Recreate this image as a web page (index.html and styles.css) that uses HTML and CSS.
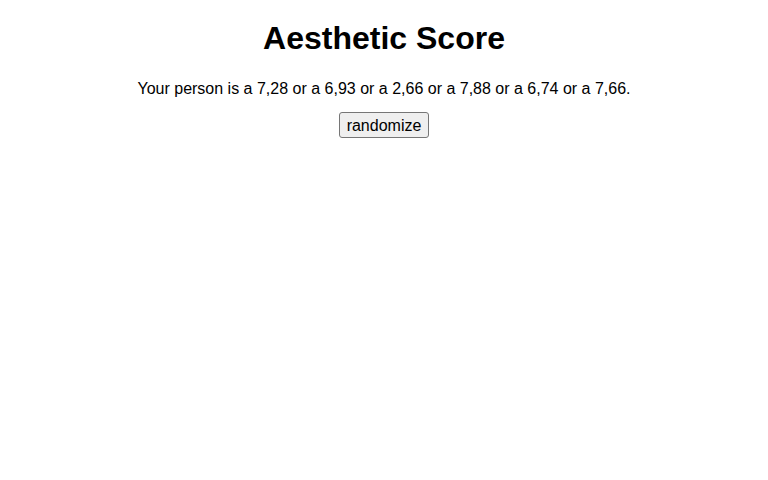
FILE: index.html
```html
<!DOCTYPE html>
<html lang="en">
<head>
    <meta charset="UTF-8">
    <meta name="viewport" content="width=device-width, initial-scale=1.0">
    <title>Aesthetic Score</title>
    <link rel="stylesheet" href="styles.css">
</head>
<body>
    <div class="container">
        <h1 class="title">Aesthetic Score</h1>
        <p class="score-line" id="score-line">Your person is a 7,28 or a 6,93 or a 2,66 or a 7,88 or a 6,74 or a 7,66.</p>
        <button class="randomize-btn" id="randomize-btn">randomize</button>
    </div>
</body>
</html>
```

FILE: styles.css
```css
body {
    font-family: "Liberation Sans", Arial, sans-serif;
    margin: 0;
    padding: 0;
    background-color: #fff;
    color: #000;
}

.container {
    display: flex;
    flex-direction: column;
    align-items: center;
    padding-top: 20px;
}

.title {
    font-size: 32px;
    font-weight: bold;
    margin: 0;
    line-height: 37px;
}

.score-line {
    font-size: 16px;
    margin: 23px 0 14px 0;
    line-height: 18px;
}

/* Plain grey browser-style button */
.randomize-btn {
    font-family: inherit;
    font-size: 16px;
    line-height: 19px;
    padding: 3px 7px 2px 7px;
    background-color: #efefef;
    border: 1px solid #767676;
    border-radius: 3px;
    color: #000;
    cursor: pointer;
}
```
